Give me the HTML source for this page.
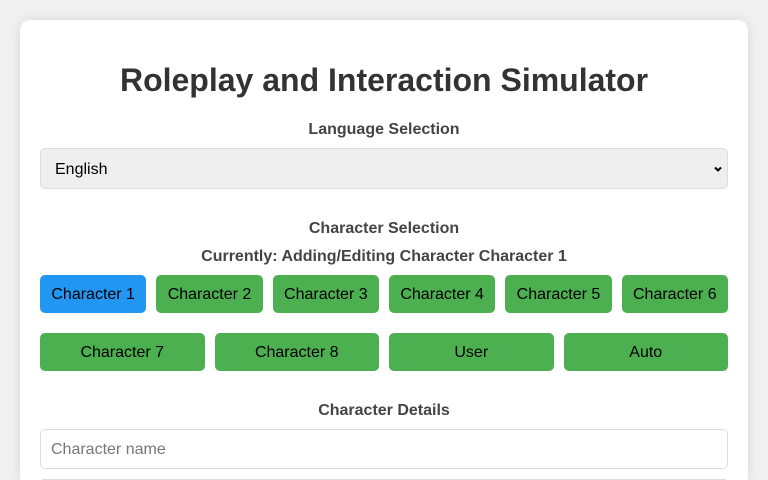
<!DOCTYPE html>
<html><head><meta charset="utf-8"><style>
*{box-sizing:border-box;margin:0;padding:0}
html,body{width:768px;height:480px;overflow:hidden}
body{background:#f0f0f0;font-family:"Liberation Sans",Arial,sans-serif;color:#333;position:relative}
.card{position:absolute;left:20px;top:20px;width:728px;height:460px;background:#fff;border-radius:10px 10px 0 0;box-shadow:0 0 10px rgba(0,0,0,0.1);overflow:hidden}
h1{position:absolute;left:0;width:728px;top:42px;text-align:center;font-size:32px;font-weight:bold;color:#333}
.lbl{position:absolute;left:0;width:728px;text-align:center;font-size:16px;font-weight:bold;color:#444}
.sel{position:absolute;left:20px;top:128px;width:688px;height:41px;background:#efefef;border:1px solid #ddd;border-radius:5px;font-size:16px;color:#000;padding:12px 14px}
.sel svg{position:absolute;right:5px;top:17px}
.row{position:absolute;left:20px;width:688px;display:flex;gap:10px}
.b{flex:1;height:38px;border-radius:5px;background:#4CAF50;color:#000;font-size:16px;display:flex;align-items:center;justify-content:center;padding-top:1px}
.blue{background:#2196F3}
.inp{position:absolute;left:20px;top:409px;width:688px;height:40px;border:1px solid #ddd;border-radius:5px;padding:11px 10px;font-size:16px;color:#777}
.inp2{position:absolute;left:22px;top:459px;width:684px;height:1px;background:#ddd}
</style></head><body>
<div class="card">
<h1>Roleplay and Interaction Simulator</h1>
<div class="lbl" style="top:101px">Language Selection</div>
<div class="sel">English<svg width="8" height="6" viewBox="0 0 8 6"><path d="M1 1.5 L4 4.5 L7 1.5" stroke="#000" stroke-width="2" fill="none"/></svg></div>
<div class="lbl" style="top:200px">Character Selection</div>
<div class="lbl" style="top:228px">Currently: Adding/Editing Character Character 1</div>
<div class="row" style="top:255px"><div class="b blue">Character 1</div><div class="b">Character 2</div><div class="b">Character 3</div><div class="b">Character 4</div><div class="b">Character 5</div><div class="b">Character 6</div></div>
<div class="row" style="top:313px"><div class="b">Character 7</div><div class="b">Character 8</div><div class="b">User</div><div class="b">Auto</div></div>
<div class="lbl" style="top:382px">Character Details</div>
<div class="inp">Character name</div>
<div class="inp2"></div>
</div>
</body></html>
